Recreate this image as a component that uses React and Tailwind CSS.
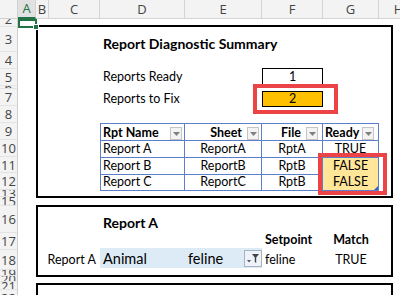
import React from "react";

const cols = [
  { l: "A", w: "w-[18px]", sel: true },
  { l: "B", w: "w-[13px]" },
  { l: "C", w: "w-[51px]" },
  { l: "D", w: "w-[85px]" },
  { l: "E", w: "w-[77px]" },
  { l: "F", w: "w-[61px]" },
  { l: "G", w: "w-[56px]" },
  { l: "H", w: "w-[40px]" },
];

const rows = [
  { l: "2", h: "h-[8px]", pos: "items-end" },
  { l: "3", h: "h-[25px]" },
  { l: "4", h: "h-[17px]" },
  { l: "5", h: "h-[17px]" },
  { l: "6", h: "h-[3px]" },
  { l: "7", h: "h-[17px]" },
  { l: "8", h: "h-[17px]" },
  { l: "9", h: "h-[17px]" },
  { l: "10", h: "h-[17px]" },
  { l: "11", h: "h-[16px]" },
  { l: "12", h: "h-[17px]" },
  { l: "13", h: "h-[7px]" },
  { l: "15", h: "h-[9px]" },
  { l: "16", h: "h-[27px]" },
  { l: "17", h: "h-[17px]" },
  { l: "18", h: "h-[20px]" },
  { l: "19", h: "h-[6px]" },
  { l: "20", h: "h-[6px]" },
  { l: "21", h: "h-[8px]" },
  { l: "22", h: "h-[17px]" },
];

const Dd = () => (
  <span className="w-[12px] h-[13px] shrink-0 border border-[#c4c4c4] bg-[#f3f3f3] flex items-center justify-center">
    <svg width="7" height="4" viewBox="0 0 7 4">
      <path d="M0 0h7L3.5 4z" fill="#808080" />
    </svg>
  </span>
);

const FilterBtn = () => (
  <span className="w-[18px] h-[17px] shrink-0 border border-[#a9b3bf] bg-[#eef3f9] flex items-center justify-center">
    <svg width="14" height="11" viewBox="0 0 14 11">
      <path d="M1 7h4l-2 2.5z" fill="#555" />
      <path d="M6 1h7l-2.8 3.5v5.5l-1.4-1v-4.5z" fill="#444" />
    </svg>
  </span>
);

const grid = "grid grid-cols-[62px_85px_77px_61px_56px]";
const tcols = "grid grid-cols-[84px_77px_61px_56px]";
const cell = "border-r border-b border-[#5b7fca] flex items-end";

export default function App() {
  return (
    <div className="relative w-[400px] h-[295px] overflow-hidden bg-white font-[Lato,sans-serif] text-[12.5px] text-black">
      {/* column headers */}
      <div className="flex h-[19px]">
        <div className="w-[18px] shrink-0 bg-[#f3f3f3] border-r border-b border-[#cfcfcf]" />
        {cols.map((c) => (
          <div
            key={c.l}
            className={`${c.w} shrink-0 flex items-center justify-center border-r font-['Open_Sans',sans-serif] text-[13px] leading-none ${
              c.sel
                ? "bg-[#e1e1e1] text-[#217346] border-b-2 border-b-[#217346] border-r-[#d4d4d4]"
                : "bg-[#f3f3f3] text-[#444] border-b border-[#d4d4d4]"
            }`}
          >
            {c.l}
          </div>
        ))}
      </div>

      <div className="flex">
        {/* row headers */}
        <div className="w-[18px] shrink-0 flex flex-col bg-[#f3f3f3] border-r border-[#cfcfcf]">
          {rows.map((r) => (
            <div
              key={r.l}
              className={`${r.h} shrink-0 overflow-hidden flex justify-center ${r.pos || "items-center"} border-b border-[#e3e3e3] font-['Open_Sans',sans-serif] text-[13px] leading-none text-[#444]`}
            >
              <span className="leading-[14px]">{r.l}</span>
            </div>
          ))}
        </div>

        {/* sheet */}
        <div className="flex-1 flex flex-col pl-[18px]">
          {/* Box 1 */}
          <div className="relative mt-[6px] w-[357px] h-[173px] shrink-0 border-2 border-black flex flex-col">
            <div className={`h-[25px] ${grid} items-end`}>
              <div />
              <div className="col-span-3 pl-[3px] font-bold text-[14px] leading-[17px] whitespace-nowrap">
                Report Diagnostic Summary
              </div>
            </div>
            <div className="h-[16px]" />
            <div className={`h-[17px] ${grid}`}>
              <div />
              <div className="pl-[3px] leading-[17px] whitespace-nowrap">Reports Ready</div>
              <div />
              <div className="border border-black text-center leading-[15px]">1</div>
            </div>
            <div className="h-[6px]" />
            <div className={`h-[16px] ${grid}`}>
              <div />
              <div className="pl-[3px] leading-[16px] whitespace-nowrap">Reports to Fix</div>
              <div />
              <div className="border border-black bg-[#ffc000] text-center leading-[14px]">2</div>
            </div>
            <div className="h-[16px]" />

            {/* table */}
            <div className="grid grid-cols-[62px_279px]">
              <div />
              <div className="border-t border-l border-[#5b7fca]">
                <div className={`${tcols} h-[17px] font-bold`}>
                  <div className={`${cell} items-center justify-between pl-[2px] pr-[2px]`}>
                    <span className="leading-[15px]">Rpt Name</span>
                    <Dd />
                  </div>
                  <div className={`${cell} items-center justify-end gap-[5px] pr-[2px]`}>
                    <span className="leading-[15px]">Sheet</span>
                    <Dd />
                  </div>
                  <div className={`${cell} items-center justify-end gap-[5px] pr-[4px]`}>
                    <span className="leading-[15px]">File</span>
                    <Dd />
                  </div>
                  <div className={`${cell} items-center justify-between pl-[2px] pr-[4px]`}>
                    <span className="leading-[15px]">Ready</span>
                    <Dd />
                  </div>
                </div>
                {[
                  ["Report A", "ReportA", "RptA", "TRUE", "h-[17px]", false],
                  ["Report B", "ReportB", "RptB", "FALSE", "h-[16px]", true],
                  ["Report C", "ReportC", "RptB", "FALSE", "h-[17px]", true, true],
                ].map(([a, b, c, d, h, warn, last]) => (
                  <div key={a} className={`${tcols} ${h}`}>
                    <div className={`${cell} pl-[2px]`}>
                      <span className="leading-[16px] whitespace-nowrap">{a}</span>
                    </div>
                    <div className={`${cell} justify-center`}>
                      <span className="leading-[16px]">{b}</span>
                    </div>
                    <div className={`${cell} justify-center`}>
                      <span className="leading-[16px]">{c}</span>
                    </div>
                    <div className={`${cell} relative justify-center ${warn ? "bg-[#ffe699]" : ""}`}>
                      <span className="leading-[16px]">{d}</span>
                      {last && (
                        <svg className="absolute right-0 bottom-0" width="4" height="4" viewBox="0 0 4 4">
                          <path d="M4 0v4H0z" fill="#3f5fb0" />
                        </svg>
                      )}
                    </div>
                  </div>
                ))}
              </div>
            </div>

            {/* highlight frames */}
            <div className="absolute left-[215px] top-[57px] w-[85px] h-[30px] border-4 border-[#ec4346]" />
            <div className="absolute left-[280px] top-[126px] w-[69px] h-[42px] border-4 border-[#ec4346]" />
          </div>

          {/* Box 2 */}
          <div className="mt-[7px] w-[357px] h-[72px] shrink-0 border-2 border-black flex flex-col">
            <div className={`h-[24px] ${grid} items-end`}>
              <div />
              <div className="col-span-2 pl-[3px] font-bold text-[14px] leading-[17px]">Report A</div>
            </div>
            <div className={`h-[17px] ${grid} font-bold`}>
              <div />
              <div />
              <div />
              <div className="pl-[3px] leading-[17px]">Setpoint</div>
              <div className="text-center leading-[17px]">Match</div>
            </div>
            <div className={`h-[20px] ${grid} items-end`}>
              <div className="text-right pr-[4px] leading-[17px] whitespace-nowrap">Report A</div>
              <div className="col-span-2 h-[20px] bg-[#ddebf7] flex items-center">
                <div className="w-[85px] shrink-0 pl-[3px] text-[14.5px] leading-[18px] self-end">Animal</div>
                <div className="flex-1 pl-[3px] text-[14.5px] leading-[18px] self-end">feline</div>
                <FilterBtn />
              </div>
              <div className="pl-[3px] leading-[17px]">feline</div>
              <div className="text-center leading-[17px]">TRUE</div>
            </div>
          </div>

          {/* Box 3 */}
          <div className="mt-[6px] w-[357px] h-[30px] shrink-0 border-2 border-b-0 border-black" />
        </div>
      </div>

      {/* active cell A2 */}
      <div className="absolute left-[18px] top-[19px] w-[19px] h-[9px] border-2 border-[#217346]" />
      <div className="absolute left-[33px] top-[24px] w-[6px] h-[6px] bg-[#217346] border border-white" />
    </div>
  );
}
